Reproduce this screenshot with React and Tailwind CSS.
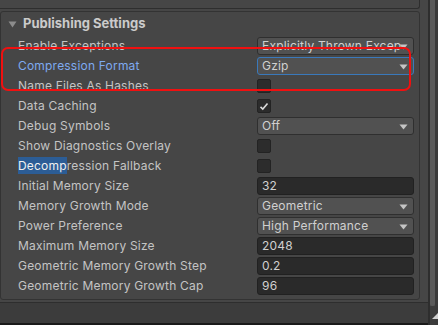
import React from "react";

const font = { fontFamily: "Inter, 'Noto Sans', sans-serif" };

function Arrow() {
  return (
    <svg width="9" height="6" viewBox="0 0 9 6" className="absolute right-[5px] top-[6px]">
      <path d="M0.5 0.5 L8.5 0.5 L4.5 5.5 Z" fill="#c4c4c4" />
    </svg>
  );
}

function Dropdown({ value, focus }) {
  return (
    <div
      className={`relative h-[18px] w-[157px] rounded-[3px] border bg-[#515151] pl-[4px] pr-[14px] flex items-center whitespace-nowrap text-[12px] tracking-[0.2px] text-[#d0d0d0] ${
        focus ? "border-[#3a79bb]" : "border-[#2f2f2f]"
      }`}
    >
      <span>{value}</span>
      <Arrow />
    </div>
  );
}

function Field({ value }) {
  return (
    <div className="h-[18px] w-[157px] rounded-[3px] border border-[#212121] bg-[#2a2a2a] pl-[4px] flex items-center text-[12px] tracking-[0.2px] text-[#d0d0d0]">
      {value}
    </div>
  );
}

function Check({ checked }) {
  return (
    <div className="h-[14px] w-[14px] rounded-[2px] border border-[#232323] bg-[#2c2c2c] flex items-center justify-center">
      {checked && (
        <svg width="10" height="9" viewBox="0 0 10 9">
          <path d="M1.5 4.8 L3.8 7 L8.5 1.5" stroke="#dcdcdc" strokeWidth="1.6" fill="none" />
        </svg>
      )}
    </div>
  );
}

function Row({ label, children, blue, highlight }) {
  return (
    <div className="h-[20px] flex items-center">
      <div className={`w-[256px] pl-[17px] text-[12px] tracking-[0.2px] whitespace-nowrap ${blue ? "text-[#7eaaf0]" : "text-[#c4c4c4]"}`}>
        {highlight ? (
          <>
            <span className="bg-[#2c5d96] text-[#f0f0f0] py-[1px]">{highlight}</span>
            <span>{label.slice(highlight.length)}</span>
          </>
        ) : (
          label
        )}
      </div>
      <div className="flex items-center">{children}</div>
    </div>
  );
}

export default function App() {
  return (
    <div className="w-[438px] h-[325px] bg-[#464646] flex overflow-hidden relative" style={font}>
      <div className="w-[428px] flex flex-col">
        <div className="h-[9px] w-[420px] border-b border-r border-[#2e2e2e] rounded-br-[3px]" />
        <div className="mt-[2px] w-[420px] h-[289px] border border-[#333333] rounded-[3px] flex flex-col">
          <div className="h-[24px] flex items-center pl-[7px] gap-[6px]">
            <svg width="9" height="7" viewBox="0 0 9 7">
              <path d="M0.5 0.5 L8.5 0.5 L4.5 6.5 Z" fill="#8c8c8c" />
            </svg>
            <span className="text-[13px] font-bold text-[#cbcbcb]">Publishing Settings</span>
          </div>
          <Row label="Enable Exceptions"><Dropdown value="Explicitly Thrown Excep" /></Row>
          <Row label="Compression Format" blue><Dropdown value="Gzip" focus /></Row>
          <Row label="Name Files As Hashes"><Check /></Row>
          <Row label="Data Caching"><Check checked /></Row>
          <Row label="Debug Symbols"><Dropdown value="Off" /></Row>
          <Row label="Show Diagnostics Overlay"><Check /></Row>
          <Row label="Decompression Fallback" highlight="Decomp"><Check /></Row>
          <Row label="Initial Memory Size"><Field value="32" /></Row>
          <Row label="Memory Growth Mode"><Dropdown value="Geometric" /></Row>
          <Row label="Power Preference"><Dropdown value="High Performance" /></Row>
          <Row label="Maximum Memory Size"><Field value="2048" /></Row>
          <Row label="Geometric Memory Growth Step"><Field value="0.2" /></Row>
          <Row label="Geometric Memory Growth Cap"><Field value="96" /></Row>
        </div>
        <div className="h-[2px]" />
        <div className="h-[1px] bg-[#2e2e2e]" />
        <div className="flex-1 bg-[#3c3c3c]" />
        <div className="h-[2px] bg-[#1a1a1a]" />
      </div>
      <div className="w-[10px] flex">
        <div className="w-[2px] bg-[#2e2e2e]" />
        <div className="w-[5px] flex flex-col">
          <div className="h-[306px] bg-[#5a5a5a] rounded-b-[2px]" />
          <div className="flex-1 bg-[#3c3c3c]" />
        </div>
        <div className="w-[3px] bg-[#3a3a3a]" />
      </div>
      <svg width="6" height="6" viewBox="0 0 6 6" className="absolute left-[432px] top-[313px]">
        <path d="M0 6 L6 0 L6 6 Z" fill="#d0d0d0" />
      </svg>
      <div className="absolute left-[1px] top-[47px] w-[410px] h-[44px] border-2 border-[#f01010] rounded-[7px] pointer-events-none" />
    </div>
  );
}
